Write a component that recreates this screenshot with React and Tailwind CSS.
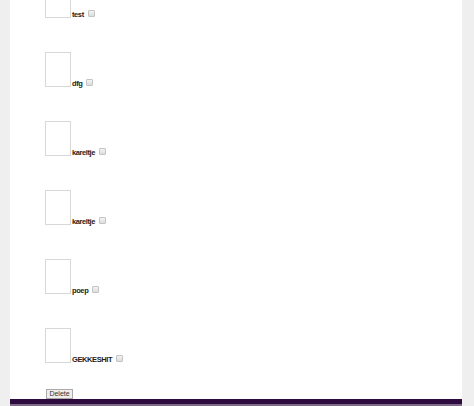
const items = [
  { id: 1, name: 'test' },
  { id: 2, name: 'dfg' },
  { id: 3, name: 'kareltje' },
  { id: 4, name: 'kareltje' },
  { id: 5, name: 'poep' },
  { id: 6, name: 'GEKKESHIT' },
];

const Row = ({ name }) => (
  <div className="flex items-end h-[35px]">
    <div className="w-[26px] h-[35px] border border-[#d8d8d8] bg-white" />
    <span className="ml-[1px] text-[7.5px] leading-[8px] font-bold text-[#222] tracking-[-0.4px] mb-[-1px]">{name}</span>
    <span className="ml-[4px] mb-[1px] w-[7px] h-[7px] border border-[#c4c4c4] rounded-[1px] bg-gradient-to-b from-[#f4f4f4] to-[#dcdcdc]" />
  </div>
);

export default function App() {
  return (
    <div className="flex h-[406px] overflow-hidden bg-[#efefef] font-['Liberation_Sans',Arial,sans-serif]">
      <div className="ml-[10px] w-[452px] h-full bg-white flex flex-col">
        <div className="pl-[35px] mt-[-17px] flex flex-col gap-[34px]">
          {items.map((it) => (
            <Row key={it.id} name={it.name} />
          ))}
        </div>
        <div className="pl-[36px] mt-[26px]">
          <button className="w-[27px] h-[10px] border border-[#a9a9a9] bg-[#eeeeee] text-[7px] leading-[8px] text-[#333] flex items-center justify-center">
            Delete
          </button>
        </div>
        <div className="h-[5px] bg-[#2e0b3f]" />
        <div className="flex-1 bg-[#7d6a88]" />
      </div>
    </div>
  );
}
